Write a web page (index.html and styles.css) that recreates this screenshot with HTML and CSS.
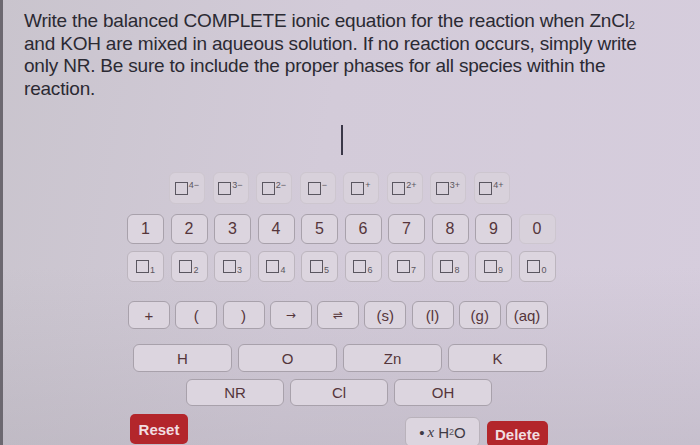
FILE: index.html
```html
<!DOCTYPE html>
<html>
<head>
<meta charset="utf-8">
<link rel="stylesheet" href="styles.css">
</head>
<body>
<div class="screen">
  <p class="question">Write the balanced COMPLETE ionic equation for the reaction when ZnCl<sub>2</sub><br>and KOH are mixed in aqueous solution. If no reaction occurs, simply write<br>only NR. Be sure to include the proper phases for all species within the<br>reaction.</p>
  <div class="answer"><span class="cursor"></span></div>

  <div class="row charges">
    <div class="key faint"><span class="sq"></span><sup>4−</sup></div>
    <div class="key faint"><span class="sq"></span><sup>3−</sup></div>
    <div class="key faint"><span class="sq"></span><sup>2−</sup></div>
    <div class="key faint"><span class="sq"></span><sup>−</sup></div>
    <div class="key faint"><span class="sq"></span><sup>+</sup></div>
    <div class="key faint"><span class="sq"></span><sup>2+</sup></div>
    <div class="key faint"><span class="sq"></span><sup>3+</sup></div>
    <div class="key faint"><span class="sq"></span><sup>4+</sup></div>
  </div>

  <div class="row digits">
    <div class="key">1</div><div class="key">2</div><div class="key">3</div><div class="key">4</div><div class="key">5</div>
    <div class="key">6</div><div class="key">7</div><div class="key">8</div><div class="key">9</div><div class="key faint">0</div>
  </div>

  <div class="row subs">
    <div class="key"><span class="sq"></span><sub>1</sub></div>
    <div class="key"><span class="sq"></span><sub>2</sub></div>
    <div class="key"><span class="sq"></span><sub>3</sub></div>
    <div class="key"><span class="sq"></span><sub>4</sub></div>
    <div class="key"><span class="sq"></span><sub>5</sub></div>
    <div class="key"><span class="sq"></span><sub>6</sub></div>
    <div class="key"><span class="sq"></span><sub>7</sub></div>
    <div class="key"><span class="sq"></span><sub>8</sub></div>
    <div class="key"><span class="sq"></span><sub>9</sub></div>
    <div class="key"><span class="sq"></span><sub>0</sub></div>
  </div>

  <div class="row symbols">
    <div class="key">+</div>
    <div class="key">(</div>
    <div class="key">)</div>
    <div class="key arrow">→</div>
    <div class="key arrow">⇌</div>
    <div class="key">(s)</div>
    <div class="key">(l)</div>
    <div class="key">(g)</div>
    <div class="key">(aq)</div>
  </div>

  <div class="row elements">
    <div class="key">H</div><div class="key">O</div><div class="key">Zn</div><div class="key">K</div>
  </div>

  <div class="row extras">
    <div class="key">NR</div><div class="key">Cl</div><div class="key">OH</div>
  </div>

  <div class="row actions">
    <div class="btn red reset">Reset</div>
    <div class="key water">• <i>x</i> H<sub>2</sub>O</div>
    <div class="btn red delete">Delete</div>
  </div>
</div>
</body>
</html>
```

FILE: styles.css
```css
html, body {
  margin: 0;
  padding: 0;
  width: 700px;
  height: 445px;
  overflow: hidden;
}
body {
  background: linear-gradient(100deg, #c9c4cd 0%, #d3cbd9 45%, #d6cddd 100%);
  font-family: "Liberation Sans", Arial, sans-serif;
}
.screen {
  position: relative;
  height: 445px;
  border-left: 3px solid #6c6870;
  box-sizing: border-box;
  background: linear-gradient(180deg, rgba(255,255,255,0) 60%, rgba(170,165,175,0.35) 100%);
}
.question {
  margin: 0;
  padding: 10px 0 0 21px;
  font-size: 19px;
  line-height: 22.5px;
  color: #2b2a33;
  letter-spacing: -0.2px;
}
.question sub {
  font-size: 11px;
  vertical-align: -2px;
  line-height: 0;
}
.answer {
  height: 57px;
  display: flex;
  align-items: flex-end;
  padding-left: 338px;
}
.cursor {
  display: block;
  width: 2px;
  height: 30px;
  background: #3a3848;
  margin-bottom: 2px;
}
.row {
  display: flex;
}
.key {
  box-sizing: border-box;
  display: flex;
  align-items: center;
  justify-content: center;
  background: #dcd5df;
  border: 1.5px solid #a8a1ab;
  border-radius: 6px;
  color: #55353b;
  font-size: 16px;
}
.key.faint {
  border-color: #cdc6cf;
  background: #d8d1db;
}
.sq {
  display: inline-block;
  width: 13px;
  height: 13px;
  border: 1.4px solid #5a5660;
  box-sizing: border-box;
}
.key sup {
  font-size: 9px;
  align-self: flex-start;
  margin-top: 7px;
  margin-left: 1px;
  color: #5a5660;
}
.key sub {
  font-size: 9px;
  align-self: flex-end;
  margin-bottom: 6px;
  margin-left: 1px;
  color: #5a5660;
}
.charges {
  margin-top: 15px;
  padding-left: 166px;
  gap: 7.5px;
}
.charges .key {
  width: 36px;
  height: 32px;
}
.digits {
  margin-top: 10px;
  padding-left: 124px;
  gap: 6.5px;
}
.digits .key {
  width: 37px;
  height: 30px;
}
.subs {
  margin-top: 7px;
  padding-left: 124px;
  gap: 6.5px;
}
.subs .key {
  width: 37px;
  height: 31px;
  border-color: #bcb5be;
}
.symbols {
  margin-top: 19px;
  padding-left: 125px;
  gap: 5.25px;
}
.symbols .key {
  width: 42px;
  height: 28px;
  font-size: 15px;
}
.symbols .key.arrow {
  font-family: "DejaVu Sans", sans-serif;
  font-size: 12px;
}
.elements {
  margin-top: 15px;
  padding-left: 130px;
  gap: 6px;
}
.elements .key {
  width: 99px;
  height: 28px;
  font-size: 15px;
}
.extras {
  margin-top: 7px;
  padding-left: 183px;
  gap: 6px;
}
.extras .key {
  width: 98px;
  height: 27px;
  font-size: 15px;
}
.actions {
  margin-top: 8px;
  padding-left: 127px;
  align-items: flex-start;
}
.btn {
  box-sizing: border-box;
  display: flex;
  align-items: center;
  justify-content: center;
  border-radius: 5px;
  font-weight: bold;
  font-size: 15px;
}
.red {
  background: #b3262b;
  color: #f1dde0;
}
.reset {
  width: 58px;
  height: 30px;
}
.water {
  margin-left: 217px;
  margin-top: 3px;
  width: 75px;
  height: 30px;
  font-size: 15px;
  border-color: #b9b2bb;
  color: #3f3a44;
}
.water i {
  font-family: "Liberation Serif", serif;
  margin: 0 4px 0 3px;
}
.water sub {
  margin: 0;
  align-self: auto;
  vertical-align: -2px;
  font-size: 9px;
}
.delete {
  margin-left: 7px;
  margin-top: 7px;
  width: 61px;
  height: 26px;
}
```
